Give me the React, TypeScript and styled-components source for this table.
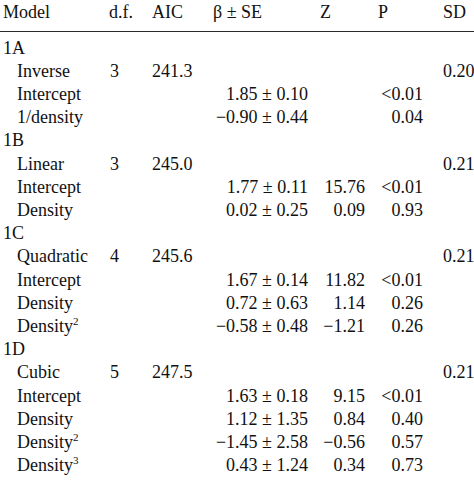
import React from "react";
import styled, { createGlobalStyle } from "styled-components";

const GlobalStyle = createGlobalStyle`
  html, body {
    margin: 0;
    padding: 0;
    background: #ffffff;
  }
`;

const Page = styled.div`
  width: 474px;
  height: 492px;
  overflow: hidden;
  background: #ffffff;
  color: #111111;
  font-family: "Liberation Serif", "Times New Roman", serif;
  font-size: 18px;
`;

const Grid = styled.div`
  display: grid;
  grid-template-columns: 109px 43px 61px 107px 58px 65px 80px;
  width: 523px;
`;

const HeadCell = styled.div<{ $first?: boolean }>`
  line-height: 23.2px;
  padding: 1px 0 6.5px ${(p) => (p.$first ? "3px" : "0")};
  border-bottom: 1.5px solid #2a2a2a;
  margin-bottom: 5px;
  white-space: nowrap;
`;

const Cell = styled.div<{ $indent?: number; $right?: number }>`
  line-height: 23.2px;
  height: 23.2px;
  white-space: nowrap;
  padding-left: ${(p) => (p.$indent !== undefined ? p.$indent : 0)}px;
  padding-right: ${(p) => (p.$right !== undefined ? p.$right : 0)}px;
  text-align: ${(p) => (p.$right !== undefined ? "right" : "left")};
`;

const Sup = styled.sup`
  font-size: 11px;
  line-height: 0;
  vertical-align: 7px;
`;

type Row = {
  label: React.ReactNode;
  group?: boolean;
  df?: string;
  aic?: string;
  beta?: string;
  z?: string;
  p?: string;
  sd?: string;
};

const rows: Row[] = [
  { label: "1A", group: true },
  { label: "Inverse", df: "3", aic: "241.3", sd: "0.20" },
  { label: "Intercept", beta: "1.85 ± 0.10", p: "<0.01" },
  { label: "1/density", beta: "−0.90 ± 0.44", p: "0.04" },
  { label: "1B", group: true },
  { label: "Linear", df: "3", aic: "245.0", sd: "0.21" },
  { label: "Intercept", beta: "1.77 ± 0.11", z: "15.76", p: "<0.01" },
  { label: "Density", beta: "0.02 ± 0.25", z: "0.09", p: "0.93" },
  { label: "1C", group: true },
  { label: "Quadratic", df: "4", aic: "245.6", sd: "0.21" },
  { label: "Intercept", beta: "1.67 ± 0.14", z: "11.82", p: "<0.01" },
  { label: "Density", beta: "0.72 ± 0.63", z: "1.14", p: "0.26" },
  { label: <>Density<Sup>2</Sup></>, beta: "−0.58 ± 0.48", z: "−1.21", p: "0.26" },
  { label: "1D", group: true },
  { label: "Cubic", df: "5", aic: "247.5", sd: "0.21" },
  { label: "Intercept", beta: "1.63 ± 0.18", z: "9.15", p: "<0.01" },
  { label: "Density", beta: "1.12 ± 1.35", z: "0.84", p: "0.40" },
  { label: <>Density<Sup>2</Sup></>, beta: "−1.45 ± 2.58", z: "−0.56", p: "0.57" },
  { label: <>Density<Sup>3</Sup></>, beta: "0.43 ± 1.24", z: "0.34", p: "0.73" },
];

const headers = ["Model", "d.f.", "AIC", "β ± SE", "Z", "P", "SD"];

export default function App() {
  return (
    <Page>
      <GlobalStyle />
      <Grid>
        {headers.map((h, i) => (
          <HeadCell key={h} $first={i === 0}>
            {h}
          </HeadCell>
        ))}
        {rows.map((r, i) => (
          <React.Fragment key={i}>
            <Cell $indent={r.group ? 3 : 17}>{r.label}</Cell>
            <Cell $indent={1}>{r.df}</Cell>
            <Cell>{r.aic}</Cell>
            <Cell $right={12}>{r.beta}</Cell>
            <Cell $right={13}>{r.z}</Cell>
            <Cell $right={20}>{r.p}</Cell>
            <Cell>{r.sd}</Cell>
          </React.Fragment>
        ))}
      </Grid>
    </Page>
  );
}
